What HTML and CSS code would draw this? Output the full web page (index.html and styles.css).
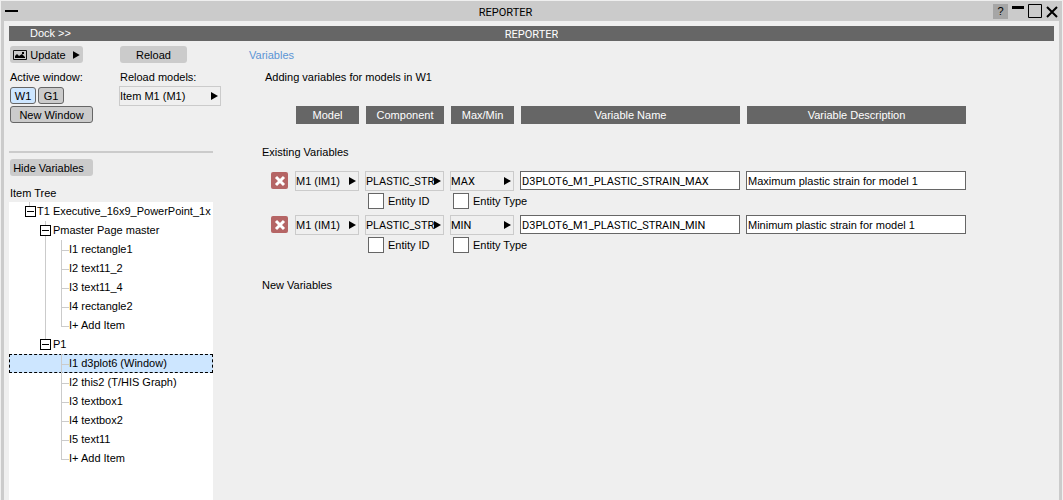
FILE: index.html
```html
<!DOCTYPE html>
<html lang="en">
<head>
<meta charset="utf-8">
<title>REPORTER</title>
<link rel="stylesheet" href="styles.css">
</head>
<body>
<div class="window">
  <header class="titlebar">
    <button class="win-btn menu-btn" aria-label="Window menu"><svg width="13" height="13" viewBox="0 0 13 13"><path d="M0 5h13v2H0z"/></svg></button>
    <h1 class="title">REPORTER</h1>
    <div class="controls">
      <button class="help">?</button>
      <button class="win-btn" aria-label="Minimise"><svg width="12" height="14" viewBox="0 0 12 14"><path d="M0 2h12v3H0z"/></svg></button>
      <button class="win-btn" aria-label="Maximise"><svg width="14" height="14" viewBox="0 0 14 14"><path d="M.5.5h13v13H.5z" fill="none" stroke="#000"/></svg></button>
      <button class="win-btn" aria-label="Close"><svg width="12" height="14" viewBox="0 0 12 14"><path d="M1 3l10 10M11 3L1 13" stroke="#000" stroke-width="2"/></svg></button>
    </div>
  </header>
  <div class="dockbar">
    <button class="dock">Dock &gt;&gt;</button>
    <h2 class="dock-title">REPORTER</h2>
  </div>
  <div class="content">
    <aside class="sidebar">
      <div class="tools">
        <div class="tool-col">
          <button class="btn update"><svg width="14" height="10" viewBox="0 0 14 10"><path d="M.5.5h13v9H.5z" fill="none" stroke="#111"/><path d="M2 8V6l2-2 2 2 3-2 3 3v1zM9 2h2v2H9z"/></svg><span>Update</span><i class="arrow"></i></button>
          <span class="caption">Active window:</span>
          <div class="win-list">
            <button class="btn outlined active">W1</button>
            <button class="btn outlined">G1</button>
            <button class="btn outlined wide">New Window</button>
          </div>
        </div>
        <div class="tool-col reload-col">
          <button class="btn reload">Reload</button>
          <label class="caption" for="reload-model">Reload models:</label>
          <div class="picker reload-picker"><select id="reload-model"><option>Item M1 (M1)</option></select></div>
        </div>
      </div>
      <hr class="rule">
      <button class="btn wide hide-vars">Hide Variables</button>
      <h3 class="tree-title">Item Tree</h3>
      <ul class="tree">
        <li class="root">
          <div class="row"><button class="toggle" aria-label="Collapse T1"></button>T1 Executive_16x9_PowerPoint_1x</div>
          <ul>
            <li class="page">
              <div class="row"><button class="toggle" aria-label="Collapse Pmaster"></button>Pmaster Page master</div>
              <ul>
                <li class="leaf"><div class="row">I1 rectangle1</div></li>
                <li class="leaf"><div class="row">I2 text11_2</div></li>
                <li class="leaf"><div class="row">I3 text11_4</div></li>
                <li class="leaf"><div class="row">I4 rectangle2</div></li>
                <li class="leaf"><div class="row">I+ Add Item</div></li>
              </ul>
            </li>
            <li class="page">
              <div class="row"><button class="toggle" aria-label="Collapse P1"></button>P1</div>
              <ul>
                <li class="leaf"><div class="row selected">I1 d3plot6 (Window)</div></li>
                <li class="leaf"><div class="row">I2 this2 (T/HIS Graph)</div></li>
                <li class="leaf"><div class="row">I3 textbox1</div></li>
                <li class="leaf"><div class="row">I4 textbox2</div></li>
                <li class="leaf"><div class="row">I5 text11</div></li>
                <li class="leaf"><div class="row">I+ Add Item</div></li>
              </ul>
            </li>
          </ul>
        </li>
      </ul>
    </aside>
    <main class="main">
      <h2 class="heading">Variables</h2>
      <p class="intro">Adding variables for models in W1</p>
      <div class="grid head">
        <span></span><span class="th">Model</span><span class="th">Component</span><span class="th">Max/Min</span><span class="th">Variable Name</span><span class="th">Variable Description</span>
      </div>
      <h3 class="section">Existing Variables</h3>
      <div class="grid variable">
        <button class="delete" aria-label="Delete variable"><svg width="17" height="17" viewBox="0 0 17 17"><rect width="17" height="17" rx="2" fill="#b56565"/><path d="M5 5l8 8M13 5l-8 8" stroke="#fff" stroke-width="3"/></svg></button>
        <div class="picker"><select aria-label="Model"><option>M1 (IM1)</option></select></div>
        <div class="picker caps"><select aria-label="Component"><option>PLASTIC_STR</option></select></div>
        <div class="picker caps"><select aria-label="Max/Min"><option>MAX</option></select></div>
        <input class="field caps" aria-label="Variable Name" value="D3PLOT6_M1_PLASTIC_STRAIN_MAX">
        <input class="field" aria-label="Variable Description" value="Maximum plastic strain for model 1">
        <label class="check entity-id"><input type="checkbox">Entity ID</label>
        <label class="check entity-type"><input type="checkbox">Entity Type</label>
      </div>
      <div class="grid variable">
        <button class="delete" aria-label="Delete variable"><svg width="17" height="17" viewBox="0 0 17 17"><rect width="17" height="17" rx="2" fill="#b56565"/><path d="M5 5l8 8M13 5l-8 8" stroke="#fff" stroke-width="3"/></svg></button>
        <div class="picker"><select aria-label="Model"><option>M1 (IM1)</option></select></div>
        <div class="picker caps"><select aria-label="Component"><option>PLASTIC_STR</option></select></div>
        <div class="picker caps"><select aria-label="Max/Min"><option>MIN</option></select></div>
        <input class="field caps" aria-label="Variable Name" value="D3PLOT6_M1_PLASTIC_STRAIN_MIN">
        <input class="field" aria-label="Variable Description" value="Minimum plastic strain for model 1">
        <label class="check entity-id"><input type="checkbox">Entity ID</label>
        <label class="check entity-type"><input type="checkbox">Entity Type</label>
      </div>
      <h3 class="section new">New Variables</h3>
    </main>
  </div>
</div>
</body>
</html>
```
FILE: styles.css
```css
* { box-sizing: border-box; margin: 0; padding: 0; }
body { background: #efefef; color: #000; font: 11px/15px "Liberation Sans", Arial, sans-serif; }
h1, h2, h3 { font-size: 11px; font-weight: normal; }
button, input, select { font: inherit; color: inherit; border: 0; border-radius: 0; }
ul { list-style: none; }
svg { display: block; }

.window { display: flex; flex-direction: column; min-height: 100vh; padding: 0 1px; border-top: 1px solid #efefef; }
.titlebar { display: flex; align-items: center; height: 20px; padding: 0 4px; background: #cbcbcb; }
.title, .dock-title, .caps { font-family: Roboto, "Liberation Sans", sans-serif; }
.title { flex: 1; padding-top: 2px; text-align: center; }
.win-btn { background: none; }
.controls { display: flex; align-items: center; gap: 4px; }
.help { width: 15px; height: 15px; background: #a6a6a6; }

.dockbar { display: grid; grid-template-columns: 1fr auto 1fr; align-items: center; border: solid #cbcbcb; border-width: 0 3px; padding: 5px 5px 0; color: #fff; }
.dockbar > * { height: 15px; background: #666; }
.dockbar::after { content: ""; height: 15px; background: #666; }
.dock { padding-left: 21px; text-align: left; }
.dock-title { padding-top: 1px; }

.content { flex: 1; display: flex; border: solid #cbcbcb; border-width: 0 3px; padding: 5px 5px 0; }
.sidebar { flex: none; width: 204px; display: flex; flex-direction: column; align-items: flex-start; }
.tools { display: flex; height: 105px; padding-left: 1px; }
.tool-col { width: 110px; }
.reload-col { width: auto; }
.btn { display: flex; align-items: center; justify-content: center; height: 17px; padding-top: 1px; background: #cbcbcb; border-radius: 3px; }
.update { width: 73px; gap: 3px; }
.update .arrow { margin-left: 4px; }
.reload { width: 67px; }
.caption { display: block; margin: 7px 0 2px; white-space: nowrap; }
.win-list { display: flex; flex-wrap: wrap; gap: 2px; width: 83px; }
.outlined { width: 26px; border: 1px solid #666; }
.outlined.active { background: #cde6ff; }
.btn.wide { width: 83px; }
.hide-vars { margin-left: 1px; padding-right: 6px; }
.rule { width: 100%; height: 2px; margin-bottom: 6px; border: 0; background: #cbcbcb; }
.tree-title { margin: 10px 0 1px 1px; }

.arrow, .picker::after { width: 7px; height: 8px; background: #000; clip-path: polygon(0 0, 100% 50%, 0 100%); }
.picker { position: relative; height: 20px; border: 1px solid #cbcbcb; }
.picker::after { content: ""; position: absolute; right: 2px; top: 5px; pointer-events: none; }
.picker select { appearance: none; display: block; width: 100%; height: 18px; background: none; }
.reload-picker { width: 102px; margin: -1px 0 0 -1px; }

.tree { flex: 1; width: 100%; background: #fff; }
.tree li { position: relative; }
.row { display: flex; align-items: center; gap: 2px; height: 19px; white-space: nowrap; }
.root > .row { padding-left: 16px; gap: 1px; }
.page > .row { padding-left: 31px; }
.leaf > .row { padding-left: 60px; }
.leaf > .row.selected { padding-left: 59px; background: #cde6ff; border: 1px dashed #000; }
.tree li::before { content: ""; position: absolute; top: 0; width: 1px; background: #cbcbcb; }
.tree .root::before { left: 20px; height: 6px; }
.tree .page::before { left: 36px; height: 100%; }
.tree .page:last-child::before { height: 6px; }
.tree .leaf::before { left: 52px; height: 100%; }
.tree .leaf:last-child::before { height: 10px; }
.leaf::after { content: ""; position: absolute; left: 52px; top: 10px; width: 8px; height: 1px; background: #cbcbcb; }
.toggle { position: relative; width: 11px; height: 11px; border: 1px solid #000; background: linear-gradient(#000, #000) center / 7px 1px no-repeat #fff; }

.main { flex: 1; min-width: 0; padding: 2px 88px 0 36px; }
.heading { color: #5b95d5; }
.intro { margin: 7px 0 0 16px; }
.grid { display: grid; grid-template-columns: 18px 64px 79px 64px minmax(0, 1fr) minmax(0, 1fr); column-gap: 6px; margin-left: 22px; }
.head { margin-top: 21px; }
.th { height: 18px; margin: 0 0 0 1px; background: #666; color: #fff; text-align: center; line-height: 18px; }
.section { margin: 21px 0 11px 13px; }
.variable { height: 44px; grid-template-rows: 20px 20px; row-gap: 1px; }
.delete { width: 17px; height: 17px; margin-top: 1px; background: none; }
.field { height: 19px; padding: 0 1px; border: 1px solid #666; background: #fff; }
.field.caps { padding-top: 2px; }
.check { display: flex; align-items: center; gap: 4px; height: 18px; margin-left: 3px; white-space: nowrap; }
.check input { appearance: none; width: 16px; height: 16px; border: 1px solid #666; background: #fff; }
.entity-id { grid-column: 3; }
.entity-type { grid-column: 4 / 6; }
.section.new { margin-top: 19px; }
```
